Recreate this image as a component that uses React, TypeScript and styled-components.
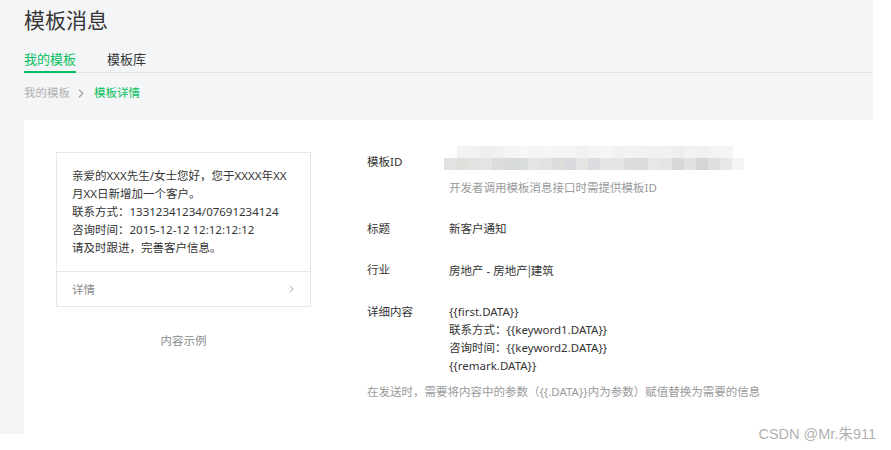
import React from "react";
import styled, { createGlobalStyle } from "styled-components";

const GlobalStyle = createGlobalStyle`
  html, body { margin: 0; padding: 0; background: #ffffff; }
  body {
    font-family: "Noto Sans", "Noto Sans CJK SC", sans-serif;
    color: #353535;
    overflow: hidden;
  }
  * { box-sizing: border-box; }
`;

const Page = styled.div`
  width: 873px;
  height: 434px;
  background: #f4f5f7;
  padding-left: 24px;
  display: flex;
  flex-direction: column;
`;

const Title = styled.h1`
  margin: 0;
  padding-top: 8px;
  font-size: 21px;
  line-height: 24px;
  font-weight: 400;
  color: #353535;
`;

const TabBar = styled.div`
  margin-top: 18px;
  display: flex;
  gap: 31px;
  border-bottom: 1px solid #e2e3e5;
`;

const Tab = styled.div<{ $active?: boolean }>`
  font-size: 13px;
  line-height: 18px;
  padding-bottom: 3px;
  margin-bottom: -1px;
  color: ${(p) => (p.$active ? "#07c160" : "#353535")};
  border-bottom: 2px solid ${(p) => (p.$active ? "#07c160" : "transparent")};
`;

const Crumbs = styled.div`
  margin-top: 12px;
  display: flex;
  align-items: center;
  font-size: 11.5px;
  line-height: 16px;
`;

const Crumb = styled.span<{ $current?: boolean }>`
  color: ${(p) => (p.$current ? "#07c160" : "#b2b2b2")};
`;

const CrumbSep = styled.svg`
  width: 6px;
  height: 9px;
  margin: 0 10px 0 8px;
`;

const Card = styled.div`
  margin-top: 19px;
  width: 867px;
  height: 330px;
  background: #ffffff;
  padding: 26px 0 0 32px;
  display: flex;
  gap: 56px;
  flex-shrink: 0;
`;

const PreviewCol = styled.div`
  width: 255px;
  margin-top: 6px;
  display: flex;
  flex-direction: column;
  align-items: center;
`;

const PreviewBox = styled.div`
  width: 100%;
  border: 1px solid #e7e7e7;
  background: #fff;
`;

const PreviewBody = styled.div`
  padding: 14px 15px 14px 15px;
  font-size: 11.5px;
  line-height: 18px;
  color: #353535;
  border-bottom: 1px solid #e7e7e7;
`;

const PreviewLine = styled.div`
  white-space: nowrap;
`;

const DetailRow = styled.div`
  height: 34px;
  padding: 0 16px 0 15px;
  display: flex;
  align-items: center;
  justify-content: space-between;
  font-size: 11.5px;
  color: #8c8c8c;
`;

const Chevron = styled.svg`
  width: 5px;
  height: 8px;
`;

const Caption = styled.div`
  margin-top: 25px;
  font-size: 11.5px;
  line-height: 18px;
  color: #8c8c8c;
`;

const InfoCol = styled.div`
  display: flex;
  flex-direction: column;
  gap: 23px;
`;

const InfoRow = styled.div`
  display: grid;
  grid-template-columns: 82px 1fr;
  font-size: 11.5px;
  line-height: 18px;
`;

const Label = styled.div<{ $offset?: number }>`
  color: #353535;
  margin-top: ${(p) => p.$offset ?? 0}px;
`;

const Value = styled.div`
  color: #353535;
`;

const Pipe = styled.span`
  font-family: "Noto Sans CJK SC", sans-serif;
`;

const Hint = styled.div<{ $gap?: number }>`
  color: #9a9a9a;
  margin-top: ${(p) => p.$gap ?? 0}px;
`;

const Mosaic = styled.div`
  display: flex;
  flex-direction: column;
`;

const MosaicRow = styled.div<{ $indent: number }>`
  display: flex;
  height: 12px;
  margin-left: ${(p) => p.$indent}px;
`;

const MosaicCell = styled.div<{ $shade: string }>`
  width: 12px;
  height: 12px;
  background: ${(p) => p.$shade};
`;

const Footer = styled.div`
  margin-top: -15px;
  font-size: 11.5px;
  line-height: 18px;
  color: #9a9a9a;
`;

const Watermark = styled.div`
  position: absolute;
  right: 15px;
  bottom: 8px;
  font-family: "Liberation Sans", Arial, "Noto Sans CJK SC", sans-serif;
  font-size: 14.5px;
  line-height: 16px;
  color: rgba(160, 160, 160, 0.85);
`;

const row1 = [
  "#f3f3f3", "#f1f1f1", "#efefef", "#f0f0f0", "#f5f5f5", "#f7f7f6", "#f4f4f4", "#f6f6f5",
  "#f5f5f4", "#f3f4f3", "#f0f1f1", "#f4f4f3", "#f6f6f6", "#f1f1f1", "#f3f3f2", "#f2f2f2",
  "#f0f0f0", "#f2f2f2", "#eeeeee", "#f3f1f1", "#f0f0f0", "#f3f3f3", "#f5f5f5",
];
const row2 = [
  "#e1e3e3", "#dfdfdc", "#e3e3e2", "#e4e4e2", "#dadcdd", "#d9dadb", "#d9dcdd", "#e4e5e4",
  "#e1e2e1", "#dcdcdb", "#d8dadd", "#e4e4e2", "#dcdde0", "#e6e6e4", "#e5e5e4", "#dcdcdb",
  "#dadbdc", "#e7e7e6", "#e5e5e5", "#d8d8d8", "#dfe1e2", "#d7d6d7", "#dfdfdf", "#e7e7e7",
  "#f3f4f6",
];

const previewLines = [
  "亲爱的XXX先生/女士您好，您于XXXX年XX",
  "月XX日新增加一个客户。",
  "联系方式：13312341234/07691234124",
  "咨询时间：2015-12-12 12:12:12:12",
  "请及时跟进，完善客户信息。",
];

const contentLines = [
  "{{first.DATA}}",
  "联系方式：{{keyword1.DATA}}",
  "咨询时间：{{keyword2.DATA}}",
  "{{remark.DATA}}",
];

export default function App() {
  return (
    <>
      <GlobalStyle />
      <Page>
        <Title>模板消息</Title>
        <TabBar>
          <Tab $active>我的模板</Tab>
          <Tab>模板库</Tab>
        </TabBar>
        <Crumbs>
          <Crumb>我的模板</Crumb>
          <CrumbSep viewBox="0 0 6 9">
            <path d="M1 0.8 L4.8 4.5 L1 8.2" fill="none" stroke="#a0a0a0" strokeWidth="1.2" />
          </CrumbSep>
          <Crumb $current>模板详情</Crumb>
        </Crumbs>
        <Card>
          <PreviewCol>
            <PreviewBox>
              <PreviewBody>
                {previewLines.map((l) => (
                  <PreviewLine key={l}>{l}</PreviewLine>
                ))}
              </PreviewBody>
              <DetailRow>
                <span>详情</span>
                <Chevron viewBox="0 0 5 8">
                  <path d="M0.8 0.6 L4 4 L0.8 7.4" fill="none" stroke="#a8a8a8" strokeWidth="1" />
                </Chevron>
              </DetailRow>
            </PreviewBox>
            <Caption>内容示例</Caption>
          </PreviewCol>
          <InfoCol>
            <InfoRow>
              <Label $offset={7}>模板ID</Label>
              <div>
                <Mosaic>
                  <MosaicRow $indent={8}>
                    {row1.map((c, i) => (
                      <MosaicCell key={i} $shade={c} />
                    ))}
                  </MosaicRow>
                  <MosaicRow $indent={-5}>
                    {row2.map((c, i) => (
                      <MosaicCell key={i} $shade={c} />
                    ))}
                  </MosaicRow>
                </Mosaic>
                <Hint $gap={9}>开发者调用模板消息接口时需提供模板ID</Hint>
              </div>
            </InfoRow>
            <InfoRow>
              <Label>标题</Label>
              <Value>新客户通知</Value>
            </InfoRow>
            <InfoRow>
              <Label>行业</Label>
              <Value>
                房地产 - 房地产<Pipe>|</Pipe>建筑
              </Value>
            </InfoRow>
            <InfoRow>
              <Label>详细内容</Label>
              <Value>
                {contentLines.map((l) => (
                  <div key={l}>{l}</div>
                ))}
              </Value>
            </InfoRow>
            <Footer>在发送时，需要将内容中的参数（{"{{.DATA}}"}内为参数）赋值替换为需要的信息</Footer>
          </InfoCol>
        </Card>
      </Page>
      <Watermark>CSDN @Mr.朱911</Watermark>
    </>
  );
}
